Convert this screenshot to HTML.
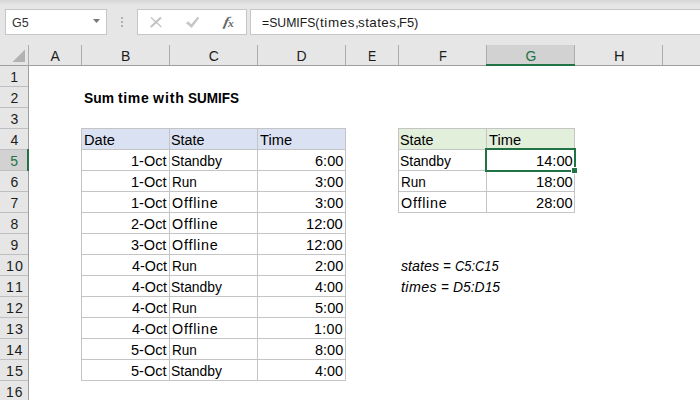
<!DOCTYPE html><html><head><meta charset='utf-8'><title>Sum time with SUMIFS</title><style>
html,body{margin:0;padding:0;}
body{width:700px;height:400px;overflow:hidden;background:#fff;position:relative;font-family:"Liberation Sans",sans-serif;font-size:14.0px;}
.abs{position:absolute;}
.t{position:absolute;white-space:pre;line-height:20px;height:20px;transform-origin:0 50%;}
.box{position:absolute;top:9px;height:24px;background:#fff;border:1px solid #c6c6c6;}
.vl{position:absolute;width:1px;background:#adadad;top:45px;height:20px;}
.hl{position:absolute;left:0;width:28px;height:1px;background:#bfbfbf;}
.gv{position:absolute;width:1px;background:#c4c4c4;}
.gh{position:absolute;height:1px;background:#c4c4c4;}
</style></head><body>
<div class="abs" style="left:0;top:0;width:700px;height:66px;background:#e6e6e6"></div>
<div class="abs" style="left:0;top:0;width:700px;height:5px;background:linear-gradient(#d6d6d6,#e6e6e6)"></div>
<div class="abs" style="left:0;top:66px;width:29px;height:334px;background:#e6e6e6"></div>
<div class="box" style="left:5px;width:100px"></div>
<div class="box" style="left:137px;width:108px"></div>
<div class="box" style="left:250px;width:460px"></div>
<svg class="abs" style="left:92px;top:18px" width="10" height="6" viewBox="0 0 10 6"><path d="M1 1 L8 1 L4.5 5 Z" fill="#777"/></svg>
<div class="abs" style="left:121px;top:17px;width:2px;height:2px;background:#b0b0b0"></div>
<div class="abs" style="left:121px;top:21px;width:2px;height:2px;background:#b0b0b0"></div>
<div class="abs" style="left:121px;top:25px;width:2px;height:2px;background:#b0b0b0"></div>
<svg class="abs" style="left:148px;top:14px" width="16" height="16" viewBox="0 0 16 16"><path d="M3 3.6 L13.4 13" stroke="#c2c2c2" stroke-width="1.3" fill="none"/><path d="M2.8 13 L13 3.4" stroke="#c2c2c2" stroke-width="2.1" fill="none"/></svg>
<svg class="abs" style="left:184px;top:14px" width="18" height="16" viewBox="0 0 18 16"><path d="M1.9 9.3 L4.1 7.2 L7.3 10.2 L13.5 2.8 L15.3 4.1 L7.7 13.9 Z" fill="#c6c6c6"/></svg>
<div id="fx" style="font-family:'Liberation Serif',serif;font-style:italic;font-weight:bold;color:#666"><span class="t" style="left:223.4px;top:11.6px;font-size:13.2px;transform-origin:0 70%;transform:scaleX(1.2) skewX(-9deg)">f</span><span class="t" style="left:227.8px;top:13.9px;font-size:10px;transform:scaleX(1.15)">x</span></div>
<div class="abs" style="left:486px;top:45px;width:89px;height:19px;background:#d2d2d2"></div>
<div class="abs" style="left:0;top:149px;width:27px;height:22px;background:#d2d2d2"></div>
<div class="vl" style="left:28px"></div>
<div class="vl" style="left:81px"></div>
<div class="vl" style="left:169px"></div>
<div class="vl" style="left:257px"></div>
<div class="vl" style="left:345px"></div>
<div class="vl" style="left:398px"></div>
<div class="vl" style="left:486px"></div>
<div class="vl" style="left:574px"></div>
<div class="vl" style="left:662px"></div>
<div class="abs" style="left:0;top:65px;width:700px;height:1px;background:#9f9f9f"></div>
<div class="abs" style="left:28px;top:66px;width:1px;height:334px;background:#9f9f9f"></div>
<div class="hl" style="top:86px"></div>
<div class="hl" style="top:107px"></div>
<div class="hl" style="top:128px"></div>
<div class="hl" style="top:149px"></div>
<div class="hl" style="top:170px"></div>
<div class="hl" style="top:191px"></div>
<div class="hl" style="top:212px"></div>
<div class="hl" style="top:233px"></div>
<div class="hl" style="top:254px"></div>
<div class="hl" style="top:275px"></div>
<div class="hl" style="top:296px"></div>
<div class="hl" style="top:317px"></div>
<div class="hl" style="top:338px"></div>
<div class="hl" style="top:359px"></div>
<div class="hl" style="top:380px"></div>
<div class="abs" style="left:486px;top:64px;width:89px;height:2px;background:#217346"></div>
<div class="abs" style="left:27px;top:149px;width:2px;height:22px;background:#217346"></div>
<svg class="abs" style="left:12px;top:49px" width="14" height="14" viewBox="0 0 14 14"><path d="M13 0.5 L13 13 L0.5 13 Z" fill="#b2b2b2"/></svg>
<div class="abs" style="left:82px;top:129px;width:263px;height:20px;background:#d9e1f2"></div>
<div class="abs" style="left:399px;top:129px;width:175px;height:20px;background:#e2efda"></div>
<div class="gv" style="left:81px;top:128px;height:253px"></div>
<div class="gv" style="left:169px;top:128px;height:253px"></div>
<div class="gv" style="left:257px;top:128px;height:253px"></div>
<div class="gv" style="left:345px;top:128px;height:253px"></div>
<div class="gh" style="left:81px;top:128px;width:265px"></div>
<div class="gh" style="left:81px;top:149px;width:265px"></div>
<div class="gh" style="left:81px;top:170px;width:265px"></div>
<div class="gh" style="left:81px;top:191px;width:265px"></div>
<div class="gh" style="left:81px;top:212px;width:265px"></div>
<div class="gh" style="left:81px;top:233px;width:265px"></div>
<div class="gh" style="left:81px;top:254px;width:265px"></div>
<div class="gh" style="left:81px;top:275px;width:265px"></div>
<div class="gh" style="left:81px;top:296px;width:265px"></div>
<div class="gh" style="left:81px;top:317px;width:265px"></div>
<div class="gh" style="left:81px;top:338px;width:265px"></div>
<div class="gh" style="left:81px;top:359px;width:265px"></div>
<div class="gh" style="left:81px;top:380px;width:265px"></div>
<div class="gv" style="left:398px;top:128px;height:85px"></div>
<div class="gv" style="left:486px;top:128px;height:85px"></div>
<div class="gv" style="left:574px;top:128px;height:85px"></div>
<div class="gh" style="left:398px;top:128px;width:177px"></div>
<div class="gh" style="left:398px;top:149px;width:177px"></div>
<div class="gh" style="left:398px;top:170px;width:177px"></div>
<div class="gh" style="left:398px;top:191px;width:177px"></div>
<div class="gh" style="left:398px;top:212px;width:177px"></div>
<div class="abs" style="left:485px;top:148px;width:87px;height:20px;border:2px solid #217346"></div>
<div class="abs" style="left:571px;top:167px;width:7px;height:7px;background:#fff"></div>
<div class="abs" style="left:572px;top:168px;width:5px;height:5px;background:#217346"></div>
<div class="t" style="left:50.61px;top:46.15px;color:#1c1c1c;transform:scaleX(1.0000)">A</div>
<div class="t" style="left:120.97px;top:46.15px;color:#1c1c1c;transform:scaleX(1.0000)">B</div>
<div class="t" style="left:208.84px;top:46.15px;color:#1c1c1c;transform:scaleX(1.0000)">C</div>
<div class="t" style="left:296.54px;top:46.15px;color:#1c1c1c;transform:scaleX(1.0000)">D</div>
<div class="t" style="left:367.99px;top:46.15px;color:#1c1c1c;transform:scaleX(0.8800)">E</div>
<div class="t" style="left:438.69px;top:46.15px;color:#1c1c1c;transform:scaleX(0.9200)">F</div>
<div class="t" style="left:525.61px;top:46.15px;color:#217346;transform:scaleX(1.0000)">G</div>
<div class="t" style="left:613.57px;top:46.15px;color:#1c1c1c;transform:scaleX(1.0500)">H</div>
<div class="t" style="left:10.18px;top:67.15px;color:#1c1c1c;transform:scaleX(1.0000)">1</div>
<div class="t" style="left:10.44px;top:88.15px;color:#1c1c1c;transform:scaleX(1.0000)">2</div>
<div class="t" style="left:10.41px;top:109.15px;color:#1c1c1c;transform:scaleX(1.0000)">3</div>
<div class="t" style="left:10.48px;top:130.15px;color:#1c1c1c;transform:scaleX(1.0000)">4</div>
<div class="t" style="left:10.35px;top:151.15px;color:#217346;transform:scaleX(1.0000)">5</div>
<div class="t" style="left:10.40px;top:172.15px;color:#1c1c1c;transform:scaleX(1.0000)">6</div>
<div class="t" style="left:10.43px;top:193.15px;color:#1c1c1c;transform:scaleX(1.0000)">7</div>
<div class="t" style="left:10.45px;top:214.15px;color:#1c1c1c;transform:scaleX(1.0000)">8</div>
<div class="t" style="left:10.41px;top:235.15px;color:#1c1c1c;transform:scaleX(1.0000)">9</div>
<div class="t" style="left:5.69px;top:256.15px;color:#1c1c1c;letter-spacing:1.06px;transform:scaleX(1.0225)">10</div>
<div class="t" style="left:5.69px;top:277.15px;color:#1c1c1c;letter-spacing:2.07px;transform:scaleX(1.0222)">11</div>
<div class="t" style="left:5.69px;top:298.15px;color:#1c1c1c;letter-spacing:1.07px;transform:scaleX(1.0235)">12</div>
<div class="t" style="left:5.69px;top:319.15px;color:#1c1c1c;letter-spacing:1.07px;transform:scaleX(1.0233)">13</div>
<div class="t" style="left:5.69px;top:340.15px;color:#1c1c1c;letter-spacing:0.65px;transform:scaleX(1.0222)">14</div>
<div class="t" style="left:5.69px;top:361.15px;color:#1c1c1c;letter-spacing:1.07px;transform:scaleX(1.0235)">15</div>
<div class="t" style="left:5.72px;top:382.15px;color:#1c1c1c;letter-spacing:1.1px;transform:scaleX(0.9953)">16</div>
<div class="t" style="left:11.55px;top:12.63px;color:#333;font-size:13.20px;transform:scaleX(0.9467)">G5</div>
<div id="formula"><span class="t" style="left:261.89px;top:12.63px;color:#1a1a1a;font-size:13.20px;transform:scaleX(0.9275)">=SUMIFS(</span><span class="t" style="left:320.06px;top:12.63px;color:#1a1a1a;font-size:13.20px;letter-spacing:0.58px;transform:scaleX(1.0159)">times,</span><span class="t" style="left:358.35px;top:12.63px;color:#1a1a1a;font-size:13.20px;letter-spacing:0.42px;transform:scaleX(1.0177)">states,</span><span class="t" style="left:399.44px;top:12.63px;color:#1a1a1a;font-size:13.20px;transform:scaleX(0.9776)">F5)</span></div>
<div id="title"><span class="t" style="left:83.64px;top:89.42px;font-size:13.80px;font-weight:bold;transform:scaleX(1.0024)">Sum</span> <span class="t" style="left:118.35px;top:89.42px;font-size:13.80px;font-weight:bold;letter-spacing:0.6px;transform:scaleX(1.0180)">time</span> <span class="t" style="left:152.71px;top:89.42px;font-size:13.80px;font-weight:bold;letter-spacing:0.9px;transform:scaleX(1.0226)">with</span> <span class="t" style="left:187.75px;top:89.42px;font-size:13.80px;font-weight:bold;transform:scaleX(0.9803)">SUMIFS</span></div>
<div class="t" style="left:83.99px;top:130.15px;transform:scaleX(1.0465)">Date</div>
<div class="t" style="left:171.33px;top:130.15px;transform:scaleX(1.0254)">State</div>
<div class="t" style="left:260.03px;top:130.15px;transform:scaleX(1.0472)">Time</div>
<div class="t" style="left:131.07px;top:151.15px;transform:scaleX(1.0365)">1-Oct</div>
<div class="t" style="left:171.37px;top:151.15px;transform:scaleX(0.9927)">Standby</div>
<div class="t" style="left:314.83px;top:151.15px;transform:scaleX(1.0386)">6:00</div>
<div class="t" style="left:131.07px;top:172.15px;transform:scaleX(1.0365)">1-Oct</div>
<div class="t" style="left:171.79px;top:172.15px;transform:scaleX(0.9679)">Run</div>
<div class="t" style="left:314.85px;top:172.15px;transform:scaleX(1.0377)">3:00</div>
<div class="t" style="left:131.07px;top:193.15px;transform:scaleX(1.0365)">1-Oct</div>
<div class="t" style="left:171.89px;top:193.15px;letter-spacing:0.74px;transform:scaleX(1.0239)">Offline</div>
<div class="t" style="left:314.85px;top:193.15px;transform:scaleX(1.0377)">3:00</div>
<div class="t" style="left:131.16px;top:214.15px;transform:scaleX(1.0339)">2-Oct</div>
<div class="t" style="left:171.89px;top:214.15px;letter-spacing:0.74px;transform:scaleX(1.0239)">Offline</div>
<div class="t" style="left:306.36px;top:214.15px;transform:scaleX(1.0495)">12:00</div>
<div class="t" style="left:131.15px;top:235.15px;transform:scaleX(1.0341)">3-Oct</div>
<div class="t" style="left:171.89px;top:235.15px;letter-spacing:0.74px;transform:scaleX(1.0239)">Offline</div>
<div class="t" style="left:306.36px;top:235.15px;transform:scaleX(1.0495)">12:00</div>
<div class="t" style="left:131.51px;top:256.15px;transform:scaleX(1.0237)">4-Oct</div>
<div class="t" style="left:171.79px;top:256.15px;transform:scaleX(0.9679)">Run</div>
<div class="t" style="left:314.86px;top:256.15px;transform:scaleX(1.0374)">2:00</div>
<div class="t" style="left:131.51px;top:277.15px;transform:scaleX(1.0237)">4-Oct</div>
<div class="t" style="left:171.37px;top:277.15px;transform:scaleX(0.9927)">Standby</div>
<div class="t" style="left:315.21px;top:277.15px;transform:scaleX(1.0244)">4:00</div>
<div class="t" style="left:131.51px;top:298.15px;transform:scaleX(1.0237)">4-Oct</div>
<div class="t" style="left:171.79px;top:298.15px;transform:scaleX(0.9679)">Run</div>
<div class="t" style="left:314.76px;top:298.15px;transform:scaleX(1.0410)">5:00</div>
<div class="t" style="left:131.51px;top:319.15px;transform:scaleX(1.0237)">4-Oct</div>
<div class="t" style="left:171.89px;top:319.15px;letter-spacing:0.74px;transform:scaleX(1.0239)">Offline</div>
<div class="t" style="left:314.40px;top:319.15px;letter-spacing:0.31px;transform:scaleX(1.0167)">1:00</div>
<div class="t" style="left:131.07px;top:340.15px;transform:scaleX(1.0367)">5-Oct</div>
<div class="t" style="left:171.79px;top:340.15px;transform:scaleX(0.9679)">Run</div>
<div class="t" style="left:314.91px;top:340.15px;transform:scaleX(1.0353)">8:00</div>
<div class="t" style="left:131.07px;top:361.15px;transform:scaleX(1.0367)">5-Oct</div>
<div class="t" style="left:171.37px;top:361.15px;transform:scaleX(0.9927)">Standby</div>
<div class="t" style="left:315.21px;top:361.15px;transform:scaleX(1.0244)">4:00</div>
<div class="t" style="left:400.23px;top:130.15px;transform:scaleX(1.0254)">State</div>
<div class="t" style="left:489.03px;top:130.15px;transform:scaleX(1.0472)">Time</div>
<div class="t" style="left:400.27px;top:151.15px;transform:scaleX(0.9927)">Standby</div>
<div class="t" style="left:535.56px;top:151.15px;transform:scaleX(1.0495)">14:00</div>
<div class="t" style="left:400.69px;top:172.15px;transform:scaleX(0.9679)">Run</div>
<div class="t" style="left:535.56px;top:172.15px;transform:scaleX(1.0495)">18:00</div>
<div class="t" style="left:400.79px;top:193.15px;letter-spacing:0.74px;transform:scaleX(1.0239)">Offline</div>
<div class="t" style="left:535.65px;top:193.15px;transform:scaleX(1.0467)">28:00</div>
<div id="n1"><span class="t" style="left:400.67px;top:256.15px;font-style:italic;transform:scaleX(1.0173)">states</span> <span class="t" style="left:442.81px;top:256.15px;font-style:italic;transform:scaleX(0.9541)">=</span> <span class="t" style="left:455.29px;top:256.15px;font-style:italic;transform:scaleX(0.9193)">C5:C15</span></div>
<div id="n2"><span class="t" style="left:401.10px;top:277.15px;font-style:italic;letter-spacing:0.36px;transform:scaleX(1.0212)">times</span> <span class="t" style="left:440.81px;top:277.15px;font-style:italic;transform:scaleX(0.9541)">=</span> <span class="t" style="left:453.43px;top:277.15px;font-style:italic;transform:scaleX(0.9922)">D5:D15</span></div>
</body></html>
